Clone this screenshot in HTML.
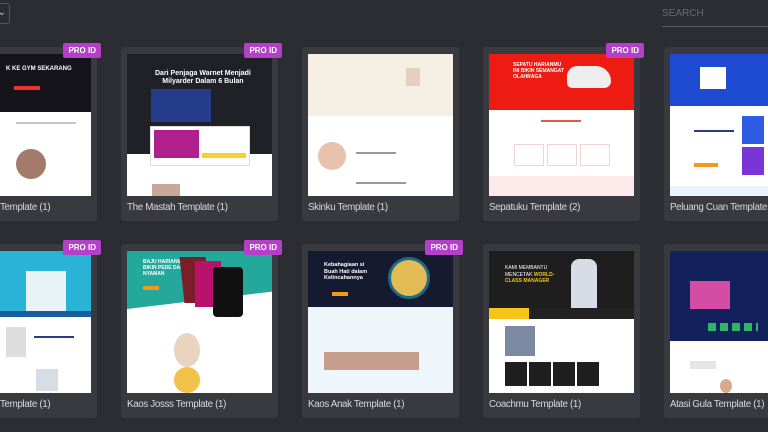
<!DOCTYPE html>
<html><head><meta charset="utf-8"><style>
*{margin:0;padding:0;box-sizing:border-box}
body{width:768px;height:432px;overflow:hidden;background:#2c2d32;font-family:"Liberation Sans",sans-serif;position:relative}
.card{position:absolute;width:157px;height:174px;background:#393a3f;border-radius:3px}
.img{position:absolute;left:6px;top:7px;width:145px;height:142px;background:#fff;overflow:hidden}
.t{position:absolute;left:6px;top:155px;color:#d8d9dc;font-size:9.8px;letter-spacing:-0.35px;white-space:nowrap}
.b{position:absolute;right:-4px;top:-4px;background:#b43fc9;color:#fff;font-size:8px;font-weight:bold;padding:3px 5px;border-radius:2px}
.top{position:absolute;left:0;top:0;width:100%}
.ln{position:absolute;height:2px;background:#c8c8c8}
.hd{position:absolute;color:#fff;font-size:6px;font-weight:bold;line-height:7px}
</style></head><body>
<div style="position:absolute;left:-10px;top:3px;width:20px;height:21px;border:1px solid #55565b;border-radius:3px;color:#ccc;font-size:10px;text-align:right;padding:3px 3px 0 0">⌄</div>
<div style="position:absolute;left:662px;top:8px;color:#6b6c71;font-size:10px">SEARCH</div>
<div style="position:absolute;left:662px;top:26px;width:106px;height:1px;background:#5d5e63"></div>

<!-- row 1 -->
<div class="card" style="left:-60px;top:47px"><div class="img"><div class="top" style="height:58px;background:#15141a"></div><div class="hd" style="left:60px;top:12px">K KE GYM SEKARANG</div><div style="position:absolute;left:68px;top:32px;width:26px;height:4px;background:#e33"></div><div style="position:absolute;left:70px;top:95px;width:30px;height:30px;border-radius:50%;background:#a47a6a"></div><div class="ln" style="left:70px;top:68px;width:60px"></div></div><div class="b">PRO ID</div><div class="t" style="left:60px">Template (1)</div></div>

<div class="card" style="left:121px;top:47px"><div class="img"><div class="top" style="height:100px;background:#1f2127"></div><div class="hd" style="left:28px;top:16px;font-size:7px;line-height:8px;text-align:center">Dari Penjaga Warnet Menjadi<br>Milyarder Dalam 6 Bulan</div><div style="position:absolute;left:24px;top:35px;width:60px;height:33px;background:#243c8a"></div><div style="position:absolute;left:23px;top:72px;width:100px;height:40px;background:#fff;border:1px solid #ddd"></div><div style="position:absolute;left:27px;top:76px;width:45px;height:28px;background:#b0208d"></div><div style="position:absolute;left:75px;top:99px;width:44px;height:5px;background:#f5d12a"></div><div style="position:absolute;left:25px;top:130px;width:28px;height:12px;background:#c9a89a"></div></div><div class="b">PRO ID</div><div class="t">The Mastah Template (1)</div></div>

<div class="card" style="left:302px;top:47px"><div class="img"><div class="top" style="height:62px;background:#f6efe3"></div><div style="position:absolute;left:98px;top:14px;width:14px;height:18px;background:#e4cfc0"></div><div style="position:absolute;left:0;top:62px;width:100%;height:18px;background:#fff"></div><div style="position:absolute;left:10px;top:88px;width:28px;height:28px;border-radius:50%;background:#e9c2ac"></div><div class="ln" style="left:48px;top:98px;width:40px;background:#999"></div><div class="ln" style="left:48px;top:128px;width:50px;background:#999"></div></div><div class="t">Skinku Template (1)</div></div>

<div class="card" style="left:483px;top:47px"><div class="img"><div class="top" style="height:56px;background:#ee1b12"></div><div style="position:absolute;left:78px;top:12px;width:44px;height:22px;border-radius:12px 18px 8px 6px;background:#eee"></div><div class="hd" style="left:24px;top:8px;font-size:5px;line-height:6px">SEPATU HARIANMU<br>INI BIKIN SEMANGAT<br>OLAHRAGA</div><div class="ln" style="left:52px;top:66px;width:40px;background:#e5564b"></div><div style="position:absolute;left:25px;top:90px;width:30px;height:22px;border:1px solid #f1d5d5"></div><div style="position:absolute;left:58px;top:90px;width:30px;height:22px;border:1px solid #f1d5d5"></div><div style="position:absolute;left:91px;top:90px;width:30px;height:22px;border:1px solid #f1d5d5"></div><div class="top" style="top:122px;height:20px;background:#fde9e9"></div></div><div class="b">PRO ID</div><div class="t">Sepatuku Template (2)</div></div>

<div class="card" style="left:664px;top:47px"><div class="img"><div class="top" style="height:52px;background:#1e4bd1"></div><div style="position:absolute;left:30px;top:13px;width:26px;height:22px;background:#fff"></div><div style="position:absolute;left:72px;top:62px;width:22px;height:28px;background:#2d5be3"></div><div style="position:absolute;left:72px;top:93px;width:22px;height:28px;background:#7a35d6"></div><div class="ln" style="left:24px;top:76px;width:40px;background:#2a3b8a"></div><div style="position:absolute;left:24px;top:109px;width:24px;height:4px;background:#f39a1c"></div><div class="top" style="top:132px;height:10px;background:#edf3fc"></div></div><div class="t">Peluang Cuan Template (</div></div>

<!-- row 2 -->
<div class="card" style="left:-60px;top:244px"><div class="img"><div class="top" style="height:60px;background:#29b3d7"></div><div style="position:absolute;left:80px;top:20px;width:40px;height:40px;background:#e8f3f8"></div><div class="top" style="top:60px;height:6px;background:#1a5d9c"></div><div style="position:absolute;left:60px;top:76px;width:20px;height:30px;background:#ddd"></div><div class="ln" style="left:88px;top:85px;width:40px;background:#2a3b8a"></div><div style="position:absolute;left:90px;top:118px;width:22px;height:22px;background:#d6dde5"></div></div><div class="b">PRO ID</div><div class="t" style="left:60px">Template (1)</div></div>

<div class="card" style="left:121px;top:244px"><div class="img"><div class="top" style="height:58px;background:#24a89b;clip-path:polygon(0 0,100% 0,100% 70%,0 100%)"></div><div class="hd" style="left:16px;top:8px;font-size:5px;line-height:6px">BAJU HARIANMU<br>BIKIN PEDE DAN<br>NYAMAN</div><div style="position:absolute;left:16px;top:35px;width:16px;height:4px;background:#f39a1c"></div><div style="position:absolute;left:55px;top:6px;width:26px;height:46px;background:#7b1e2a;transform:skewX(6deg)"></div><div style="position:absolute;left:68px;top:10px;width:26px;height:46px;background:#b8126b"></div><div style="position:absolute;left:86px;top:16px;width:30px;height:50px;background:#111;border-radius:4px"></div><div style="position:absolute;left:47px;top:82px;width:26px;height:34px;border-radius:50%;background:#e9d4c0"></div><div style="position:absolute;left:47px;top:116px;width:26px;height:26px;border-radius:50%;background:#f2c14a"></div></div><div class="b">PRO ID</div><div class="t">Kaos Josss Template (1)</div></div>

<div class="card" style="left:302px;top:244px"><div class="img"><div class="top" style="height:56px;background:#161a30"></div><div class="hd" style="left:16px;top:11px;font-size:5.5px;line-height:6.5px">Kebahagiaan si<br>Buah Hati dalam<br>Kelincahannya</div><div style="position:absolute;left:24px;top:41px;width:16px;height:4px;background:#f39a1c"></div><div style="position:absolute;left:80px;top:6px;width:42px;height:42px;border-radius:50%;background:#e2bb55;border:3px solid #1d6a8a"></div><div class="top" style="top:56px;height:86px;background:#eef5fb"></div><div style="position:absolute;left:16px;top:101px;width:95px;height:18px;background:#c69e8b"></div></div><div class="b">PRO ID</div><div class="t">Kaos Anak Template (1)</div></div>

<div class="card" style="left:483px;top:244px"><div class="img"><div class="top" style="height:57px;background:#1e1e1e"></div><div style="position:absolute;left:82px;top:8px;width:26px;height:49px;background:#d7dbe6;border-radius:8px 8px 0 0"></div><div class="hd" style="left:16px;top:14px;font-size:5px;line-height:6.5px;font-weight:normal">KAMI MEMBANTU<br>MENCETAK <b style="color:#f5c518">WORLD-<br>CLASS MANAGER</b></div><div style="position:absolute;left:0;top:57px;width:40px;height:11px;background:#f5c518"></div><div style="position:absolute;left:40px;top:57px;width:105px;height:11px;background:#222"></div><div style="position:absolute;left:16px;top:75px;width:30px;height:30px;background:#7c8aa1"></div><div style="position:absolute;left:16px;top:111px;width:94px;height:24px;background:repeating-linear-gradient(90deg,#1f1f1f 0 22px,#fff 22px 24px)"></div></div><div class="t">Coachmu Template (1)</div></div>

<div class="card" style="left:664px;top:244px"><div class="img"><div class="top" style="height:90px;background:#12205c"></div><div style="position:absolute;left:20px;top:30px;width:40px;height:28px;background:#d44ca3"></div><div style="position:absolute;left:38px;top:72px;width:50px;height:8px;background:repeating-linear-gradient(90deg,#2fb565 0 8px,transparent 8px 12px)"></div><div style="position:absolute;left:20px;top:110px;width:26px;height:8px;background:#e5e5e5"></div><div style="position:absolute;left:50px;top:128px;width:12px;height:14px;border-radius:50%;background:#d9a98f"></div></div><div class="t">Atasi Gula Template (1)</div></div>
</body></html>
